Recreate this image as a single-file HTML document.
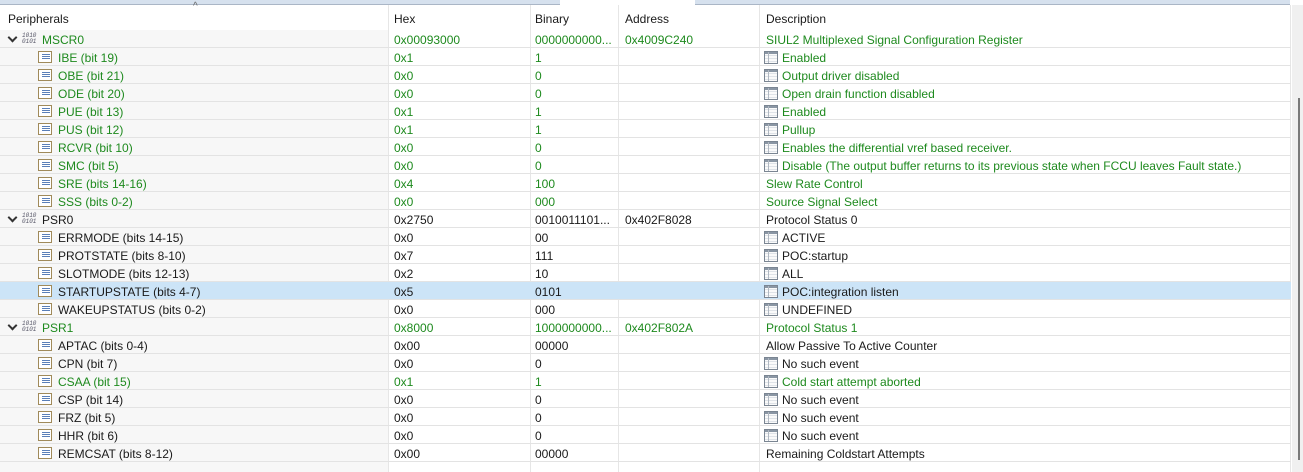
<!DOCTYPE html>
<html><head><meta charset="utf-8"><style>
*{box-sizing:border-box;margin:0;padding:0}
body{width:1303px;height:472px;overflow:hidden;background:#fff;font-family:"Liberation Sans",sans-serif;font-size:12px;color:#1a1a1a;position:relative}
.band{position:absolute;top:0;height:5px;background:#d6e1ee;border-bottom:1px solid #aab6c6}
.hdr{position:absolute;top:5px;left:0;width:1291px;height:25px}
.hdr span{position:absolute;top:7px}
.vl{position:absolute;top:5px;bottom:0;width:1px;background:#e6e6e6}
.col0{position:absolute;left:0;top:30px;width:388px;bottom:0;background:#f7f7f7}
.row{position:absolute;left:0;width:1291px;height:18px;border-bottom:1px solid #e3e3e3}
.row span{position:absolute;top:3px;white-space:nowrap}
.g{color:#1e8a1e}
.sel{background:#cce4f7}
.fi{position:absolute;left:38px;top:3px;width:14px;height:12px;border:1px solid #a08a5a;background:#fff}
.fi:before{content:"";position:absolute;left:3px;top:2px;width:8px;height:6px;background:repeating-linear-gradient(#5a7fb8 0 1px,transparent 1px 2px)}
.di{position:absolute;left:764px;top:3px;width:14px;height:13px;border:1px solid #7a8592;background:repeating-linear-gradient(#dfe3e8 0 1px,#fafafa 1px 3px)}
.di:before{content:"";position:absolute;left:0;right:0;top:0;height:2px;background:#8a96a4}
.di:after{content:"";position:absolute;left:3px;top:0;bottom:0;width:1px;background:#b0b8c2}
.chev{position:absolute;left:9px;top:4px;width:7px;height:7px;border-right:2px solid #333;border-bottom:2px solid #333;transform:rotate(45deg)}
.bi{position:absolute;left:22px;top:3px;font-size:6px;line-height:6px;color:#556;font-family:"Liberation Mono",monospace;letter-spacing:0}
.sb{position:absolute;left:1292px;top:5px;width:11px;bottom:0;background:#f0f0f0}
.th{position:absolute;left:1298px;top:98px;width:2px;height:362px;background:#7a7a7a}
</style></head><body>
<div class="band" style="left:0;width:560px"></div>
<div class="band" style="left:695px;width:595px"></div>
<div class="col0"></div>
<div class="hdr">
<span style="left:8px">Peripherals</span>
<span style="left:193px;top:-4px;font-size:10px;color:#666">^</span>
<span style="left:394px">Hex</span>
<span style="left:535px">Binary</span>
<span style="left:625px">Address</span>
<span style="left:766px">Description</span>
</div>
<div class="vl" style="left:388px"></div>
<div class="vl" style="left:530px"></div>
<div class="vl" style="left:618px"></div>
<div class="vl" style="left:759px"></div>
<div class="vl" style="left:1290px"></div>
<div class="sb"></div><div class="th"></div>
<div id="rows"></div>
<script>
const R=[
[1,1,"MSCR0","0x00093000","0000000000...","0x4009C240","SIUL2 Multiplexed Signal Configuration Register",0],
[0,1,"IBE (bit 19)","0x1","1","","Enabled",1],
[0,1,"OBE (bit 21)","0x0","0","","Output driver disabled",1],
[0,1,"ODE (bit 20)","0x0","0","","Open drain function disabled",1],
[0,1,"PUE (bit 13)","0x1","1","","Enabled",1],
[0,1,"PUS (bit 12)","0x1","1","","Pullup",1],
[0,1,"RCVR (bit 10)","0x0","0","","Enables the differential vref based receiver.",1],
[0,1,"SMC (bit 5)","0x0","0","","Disable (The output buffer returns to its previous state when FCCU leaves Fault state.)",1],
[0,1,"SRE (bits 14-16)","0x4","100","","Slew Rate Control",0],
[0,1,"SSS (bits 0-2)","0x0","000","","Source Signal Select",0],
[1,0,"PSR0","0x2750","0010011101...","0x402F8028","Protocol Status 0",0],
[0,0,"ERRMODE (bits 14-15)","0x0","00","","ACTIVE",1],
[0,0,"PROTSTATE (bits 8-10)","0x7","111","","POC:startup",1],
[0,0,"SLOTMODE (bits 12-13)","0x2","10","","ALL",1],
[0,0,"STARTUPSTATE (bits 4-7)","0x5","0101","","POC:integration listen",1,1],
[0,0,"WAKEUPSTATUS (bits 0-2)","0x0","000","","UNDEFINED",1],
[1,1,"PSR1","0x8000","1000000000...","0x402F802A","Protocol Status 1",0],
[0,0,"APTAC (bits 0-4)","0x00","00000","","Allow Passive To Active Counter",0],
[0,0,"CPN (bit 7)","0x0","0","","No such event",1],
[0,1,"CSAA (bit 15)","0x1","1","","Cold start attempt aborted",1],
[0,0,"CSP (bit 14)","0x0","0","","No such event",1],
[0,0,"FRZ (bit 5)","0x0","0","","No such event",1],
[0,0,"HHR (bit 6)","0x0","0","","No such event",1],
[0,0,"REMCSAT (bits 8-12)","0x00","00000","","Remaining Coldstart Attempts",0]];
let h="";
R.forEach((r,i)=>{const[p,g,n,hx,b,a,d,ic,s]=r;const top=30+i*18;
h+=`<div class="row ${g?'g':''} ${s?'sel':''}" style="top:${top}px">`;
if(p)h+=`<i class="chev"></i><i class="bi">1010<br>0101</i><span style="left:42px">${n}</span>`;
else h+=`<i class="fi"></i><span style="left:58px">${n}</span>`;
h+=`<span style="left:394px">${hx}</span><span style="left:535px">${b}</span><span style="left:625px">${a}</span>`;
if(ic)h+=`<i class="di"></i><span style="left:782px">${d}</span>`;else h+=`<span style="left:766px">${d}</span>`;
h+="</div>";});
document.getElementById("rows").innerHTML=h;
</script>
</body></html>
